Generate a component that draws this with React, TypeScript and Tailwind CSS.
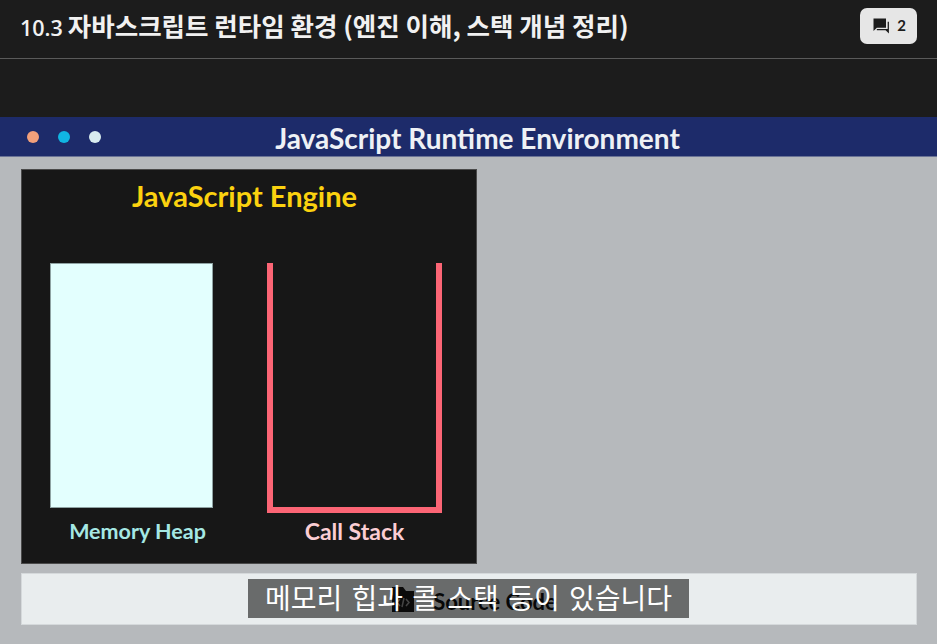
const sans = "font-['Noto_Sans_CJK_KR','Noto_Sans',sans-serif]";

function CommentIcon() {
  return (
    <svg width="20" height="20" viewBox="0 0 24 24" fill="#1c1c1c">
      <path d="M3 3h15v11H7l-4 4V3z" />
      <path d="M20 7h1.500v14l-4-4H7v-1.500h13V7z" />
    </svg>
  );
}

function TitleBar() {
  return (
    <header className="flex h-[59px] items-center justify-between border-b border-[#5a5a5a] pr-[20px] pl-[20px]">
      <h1 className="-mt-[6px] flex items-baseline gap-[5px] leading-[30px] font-bold text-[#f1f1f1]">
        <span className="font-['Open_Sans',sans-serif] text-[21.500px] font-semibold">10.3</span>
        <span className={`${sans} text-[25.500px] font-semibold`}>자바스크립트 런타임 환경 (엔진 이해, 스택 개념 정리)</span>
      </h1>
      <button className="-mt-[7px] flex h-[36px] w-[57px] items-center justify-center gap-[6px] rounded-[7px] bg-[#e6e6e6] font-['Lato',sans-serif] text-[15px] font-bold text-[#1c1c1c]">
        <CommentIcon />
        <span>2</span>
      </button>
    </header>
  );
}

function WindowBar() {
  return (
    <div className="relative flex h-[40px] items-center border-b border-[#6a7396] bg-[#1d2b6a] pl-[27px]">
      <div className="flex items-center gap-[19px]">
        <span className="h-[12px] w-[12px] rounded-full bg-[#f2a07b]" />
        <span className="h-[12px] w-[12px] rounded-full bg-[#10b5e3]" />
        <span className="h-[12px] w-[12px] rounded-full bg-[#d9ecef]" />
      </div>
      <div className="absolute inset-x-0 top-0 pl-[18px] text-center font-['Lato',sans-serif] text-[28px] leading-[42px] font-bold text-[#eef1f5]">
        JavaScript Runtime Environment
      </div>
    </div>
  );
}

function EnginePanel() {
  return (
    <div className="flex h-[395px] w-[456px] flex-col border border-[#4a4a4a] bg-[#171717] font-['Lato',sans-serif] font-bold">
      <div className="mt-[8px] ml-[-9px] text-center text-[29px] leading-[36px] text-[#fbd20f]">
        JavaScript Engine
      </div>
      <div className="mt-[49px] flex items-start pl-[28px]">
        <div className="flex w-[163px] flex-col items-center">
          <div className="h-[245px] w-full border border-[#8fa3a3] bg-[#e3fffe]" />
          <span className="mt-[9px] ml-[12px] text-[21.500px] leading-[28px] text-[#a5e8e4]">Memory Heap</span>
        </div>
        <div className="ml-[54px] flex w-[175px] flex-col items-center">
          <div className="h-[250px] w-full border-x-[6px] border-b-[6px] border-[#fb6575]" />
          <span className="mt-[4px] text-[23px] leading-[28px] text-[#fbcdd3]">Call Stack</span>
        </div>
      </div>
    </div>
  );
}

function SourceLogo() {
  return (
    <div className="flex items-start gap-[18px] pt-[11px] pl-[10px] font-['Lato',sans-serif] text-[22px] leading-[28px] font-bold text-[#111111]">
      <svg width="24" height="28" viewBox="0 0 24 28">
        <path d="M1 2h11l3 4h8v21H1z" fill="#1a1a1a" />
        <path d="M9 14l-3 3.500 3 3.500M15 14l3 3.500-3 3.500M13 13l-2 9" stroke="#9a9a9a" strokeWidth="1.500" fill="none" />
      </svg>
      <span className="mt-[3px]">Source Code</span>
    </div>
  );
}

function CaptionBar() {
  return (
    <div className="relative mt-[9px] flex h-[52px] w-[896px] justify-center overflow-hidden border border-[#d5d9db] bg-[#e9edee]">
      <SourceLogo />
      <div className={`${sans} absolute top-[5px] left-[226px] flex h-[39px] w-[441px] items-center justify-center bg-[#000000]/[0.55] pb-[3px] text-[28px] leading-none font-normal text-white [word-spacing:3px]`}>
        메모리 힙과 콜 스택 등이 있습니다
      </div>
    </div>
  );
}

export default function App() {
  return (
    <div className="h-[644px] w-[937px] overflow-hidden bg-[#1c1c1c]">
      <TitleBar />
      <div className="h-[58px]" />
      <WindowBar />
      <main className="h-[487px] bg-[#b6b9bc] pt-[12px] pl-[21px]">
        <EnginePanel />
        <CaptionBar />
      </main>
    </div>
  );
}
